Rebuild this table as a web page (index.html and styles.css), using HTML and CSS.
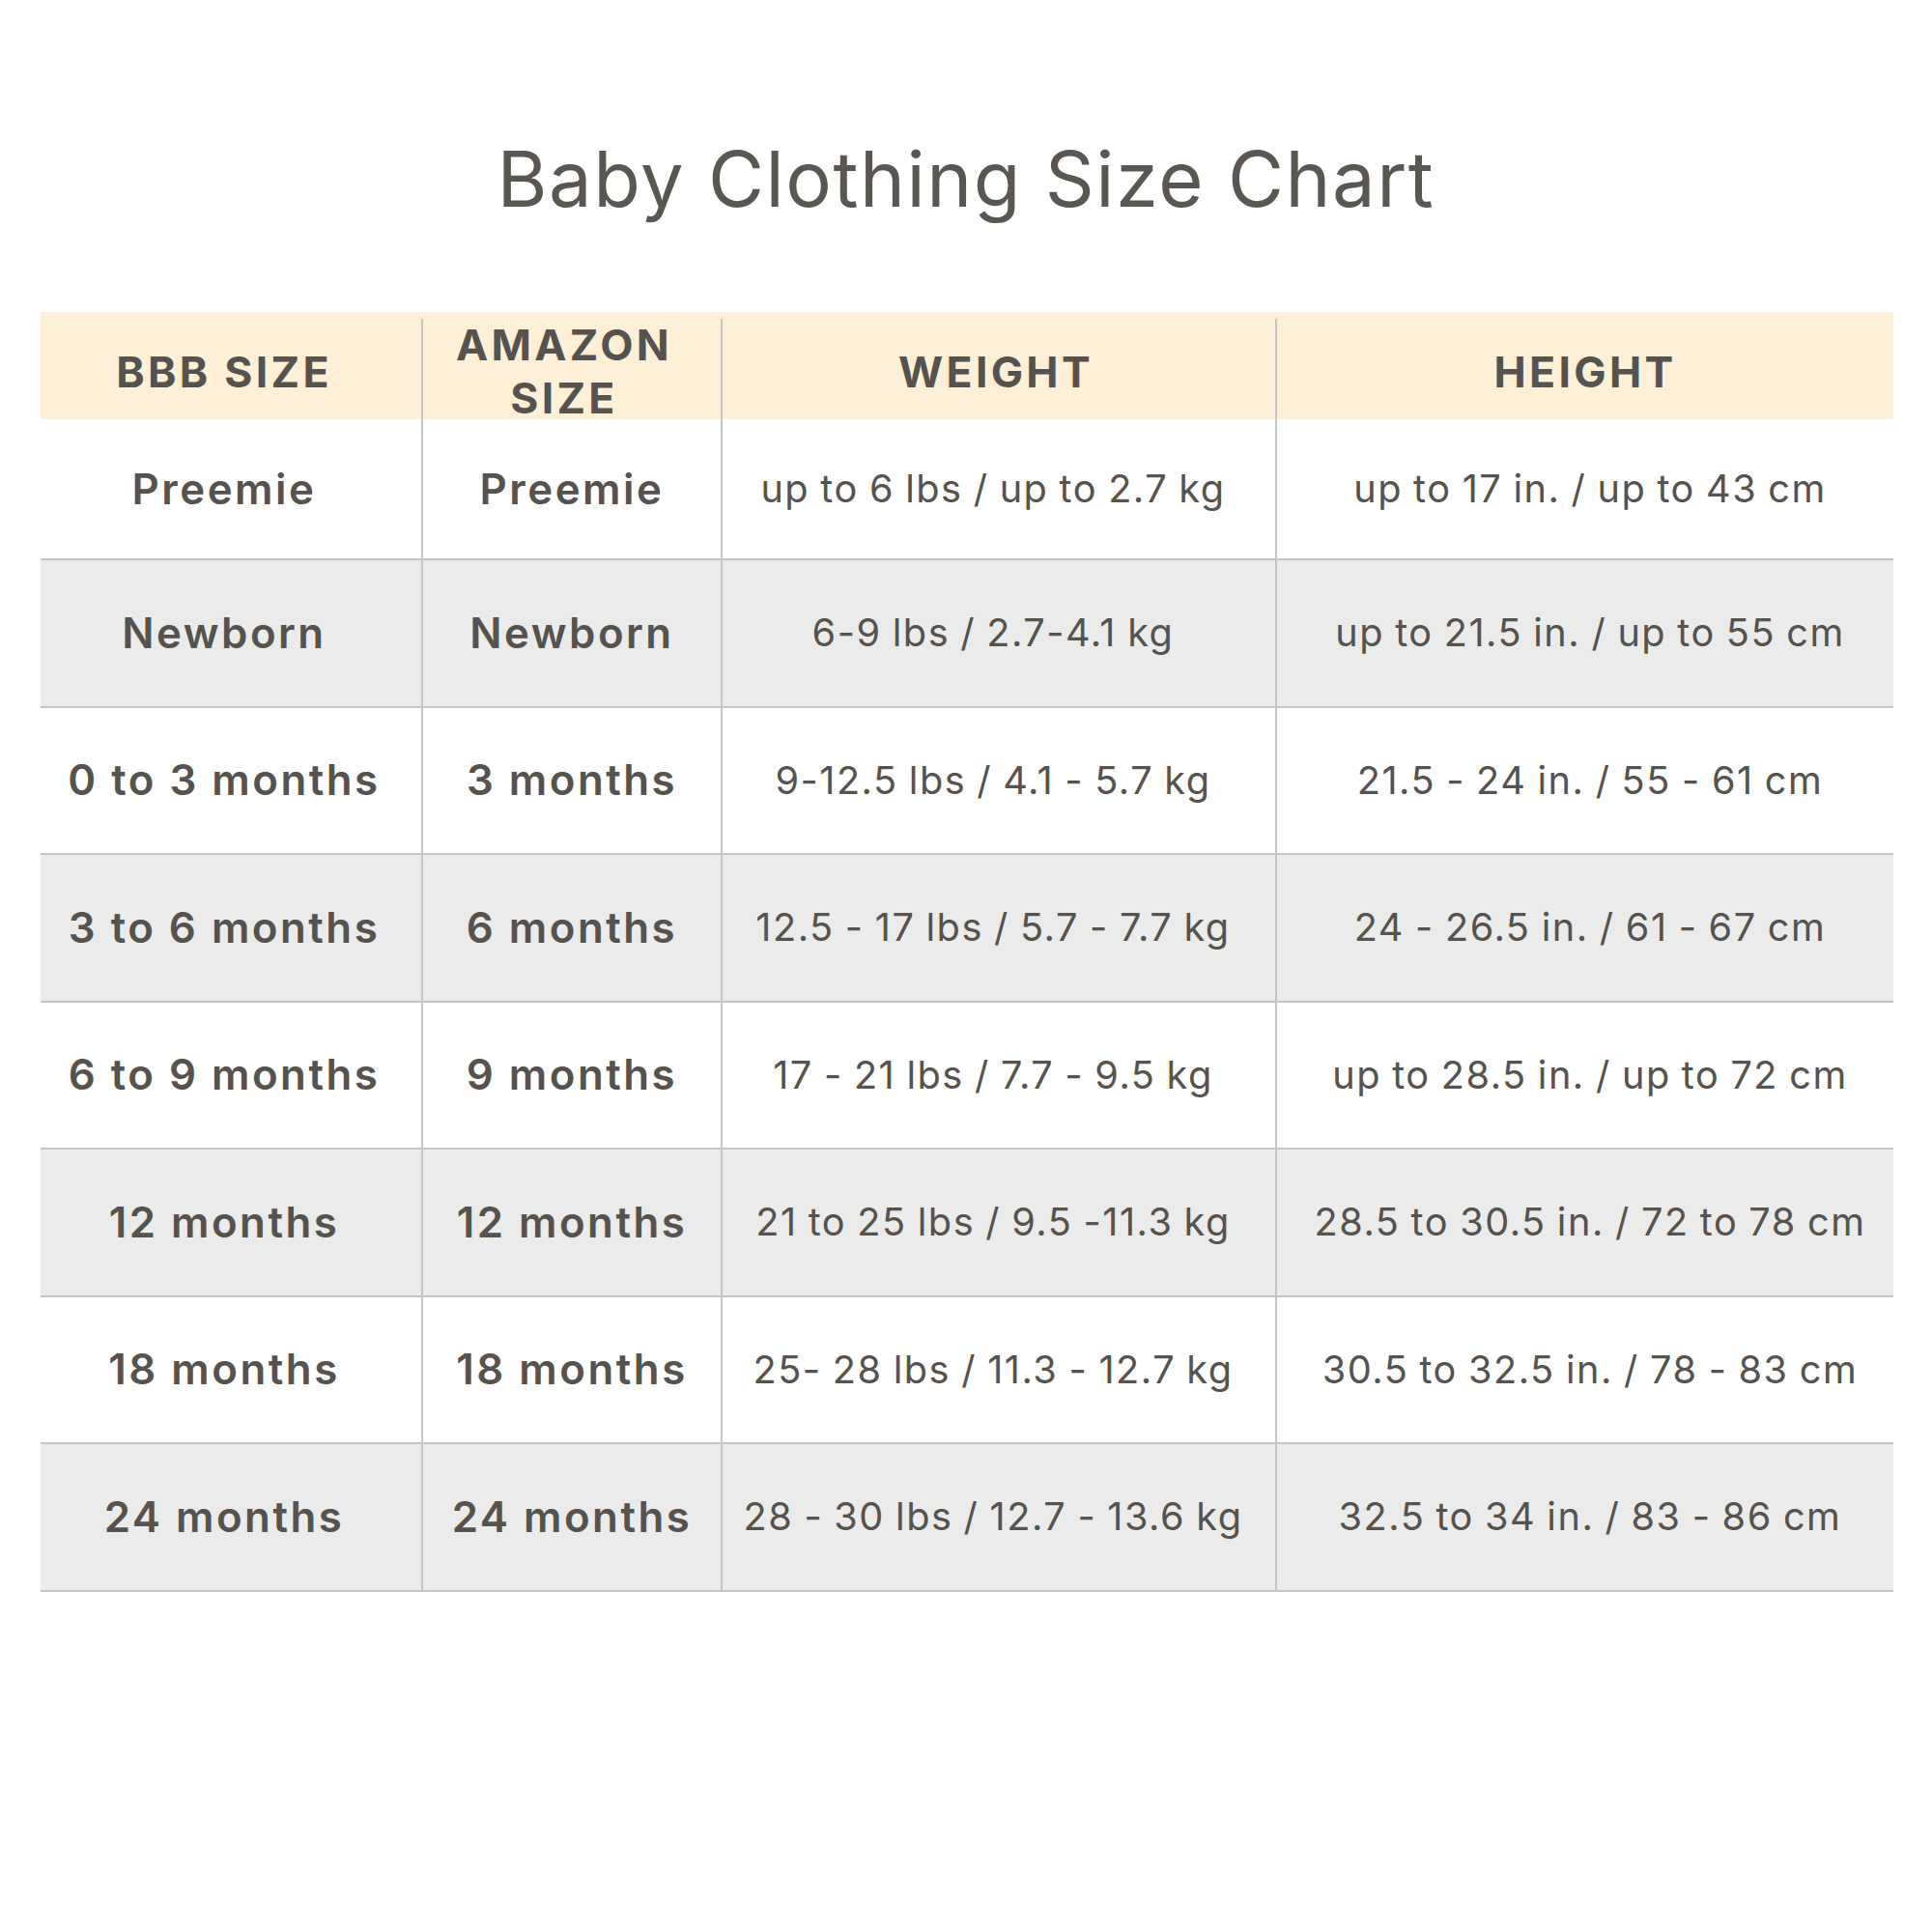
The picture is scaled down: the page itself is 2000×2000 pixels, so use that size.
FILE: index.html
```html
<!DOCTYPE html>
<html lang="en">
<head>
<meta charset="utf-8">
<title>Baby Clothing Size Chart</title>
<link rel="stylesheet" href="styles.css">
</head>
<body>
<main class="page">
  <h1 class="title">Baby Clothing Size Chart</h1>
  <div class="chart">
    <div class="row head">
      <div class="cell c1">BBB SIZE</div>
      <div class="cell c2 two">AMAZON<br>SIZE</div>
      <div class="cell c3">WEIGHT</div>
      <div class="cell c4">HEIGHT</div>
    </div>
    <div class="row first">
      <div class="cell c1 strong">Preemie</div>
      <div class="cell c2 strong">Preemie</div>
      <div class="cell c3">up to 6 lbs / up to 2.7 kg</div>
      <div class="cell c4">up to 17 in. / up to 43 cm</div>
    </div>
    <div class="row even">
      <div class="cell c1 strong">Newborn</div>
      <div class="cell c2 strong">Newborn</div>
      <div class="cell c3">6-9 lbs / 2.7-4.1 kg</div>
      <div class="cell c4">up to 21.5 in. / up to 55 cm</div>
    </div>
    <div class="row odd">
      <div class="cell c1 strong">0 to 3 months</div>
      <div class="cell c2 strong">3 months</div>
      <div class="cell c3">9-12.5 lbs / 4.1 - 5.7 kg</div>
      <div class="cell c4">21.5 - 24 in. / 55 - 61 cm</div>
    </div>
    <div class="row even">
      <div class="cell c1 strong">3 to 6 months</div>
      <div class="cell c2 strong">6 months</div>
      <div class="cell c3">12.5 - 17 lbs / 5.7 - 7.7 kg</div>
      <div class="cell c4">24 - 26.5 in. / 61 - 67 cm</div>
    </div>
    <div class="row odd">
      <div class="cell c1 strong">6 to 9 months</div>
      <div class="cell c2 strong">9 months</div>
      <div class="cell c3">17 - 21 lbs / 7.7 - 9.5 kg</div>
      <div class="cell c4">up to 28.5 in. / up to 72 cm</div>
    </div>
    <div class="row even">
      <div class="cell c1 strong">12 months</div>
      <div class="cell c2 strong">12 months</div>
      <div class="cell c3">21 to 25 lbs / 9.5 -11.3 kg</div>
      <div class="cell c4">28.5 to 30.5 in. / 72 to 78 cm</div>
    </div>
    <div class="row odd">
      <div class="cell c1 strong">18 months</div>
      <div class="cell c2 strong">18 months</div>
      <div class="cell c3">25- 28 lbs / 11.3 - 12.7 kg</div>
      <div class="cell c4">30.5 to 32.5 in. / 78 - 83 cm</div>
    </div>
    <div class="row even">
      <div class="cell c1 strong">24 months</div>
      <div class="cell c2 strong">24 months</div>
      <div class="cell c3">28 - 30 lbs / 12.7 - 13.6 kg</div>
      <div class="cell c4">32.5 to 34 in. / 83 - 86 cm</div>
    </div>
  </div>
</main>
</body>
</html>
```
FILE: styles.css
```css
html, body {
  margin: 0;
  padding: 0;
  background: #ffffff;
}

.page {
  width: 2000px;
  padding-top: 137px;
  font-family: "Inter", "Noto Sans", sans-serif;
  color: #56524d;
}

.title {
  margin: 0;
  font-size: 79.5px;
  font-weight: 400;
  line-height: 96px;
  letter-spacing: 1.5px;
  text-align: center;
  color: #5a5651;
}

.chart {
  margin: 90px 0 0 42px;
  width: 1918px;
}

.row {
  display: grid;
  grid-template-columns: 394px 310px 574px 640px;
  box-sizing: border-box;
  height: 152.5px;
  border-bottom: 2px solid #c6c6c6;
}

.row.head {
  height: 111px;
  padding-top: 7px;
  background: #fdf0d7;
  border-bottom: none;
}

.row.first {
  height: 146px;
}

.row.even {
  background: #ebebeb;
}

.cell {
  display: flex;
  align-items: center;
  justify-content: center;
  text-align: center;
  font-size: 39.7px;
  font-weight: 400;
  letter-spacing: 1.5px;
  word-spacing: -1.5px;
  font-variant-numeric: proportional-nums;
  white-space: nowrap;
}

.cell.c2,
.cell.c3,
.cell.c4 {
  border-left: 2px solid #c6c6c6;
}

.cell.c1 {
  padding-right: 14px;
}

.cell.c3 {
  padding-right: 12px;
}

.cell.c4 {
  padding-left: 10px;
}

.cell.strong {
  font-size: 43.8px;
  font-weight: 600;
  letter-spacing: 2.5px;
  word-spacing: 0;
}

.head .cell {
  font-size: 44.5px;
  font-weight: 700;
  letter-spacing: 3.3px;
  word-spacing: 0;
  line-height: 55px;
  padding-bottom: 6px;
}

.head .cell.c2 {
  padding-right: 16px;
}

.head .cell.c3 {
  padding-right: 6px;
}

.head .cell.c4 {
  padding-left: 0;
}
```
